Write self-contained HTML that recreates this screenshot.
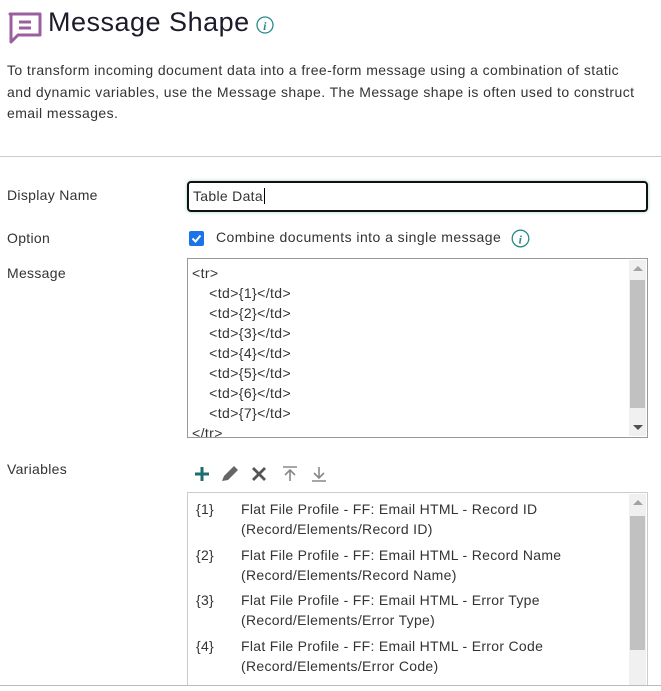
<!DOCTYPE html>
<html><head><style>
*{margin:0;padding:0;box-sizing:border-box}
body{width:661px;height:691px;overflow:hidden;background:#fff;font-family:"Liberation Sans",sans-serif;color:#333;font-size:14px;position:relative;letter-spacing:0.3px}
.a{position:absolute;white-space:nowrap}
.lbl{left:7px;font-size:14px;color:#333}
.sb{position:absolute;right:1px;top:1px;bottom:1px;width:17px;background:#f0f0f0}
.th{position:absolute;left:1px;right:1px;background:#c1c1c1}
.up,.dn{position:absolute;left:4px;width:0;height:0;border-left:5px solid transparent;border-right:5px solid transparent}
.up{top:6px;border-bottom:5px solid #a3a3a3}
.dn{bottom:6px;border-top:5px solid #505050}
</style></head><body>
<svg class="a" style="left:7px;top:11px" width="36" height="34" viewBox="0 0 36 34"><path d="M3 3h30v21H11l-7 7V3z" fill="none" stroke="#9b5fa0" stroke-width="3" stroke-linejoin="round"/><path d="M12 11h12M12 17h12" stroke="#9b5fa0" stroke-width="3"/></svg>
<div class="a" style="left:48px;top:7px;font-size:27px;color:#1b1b2b;letter-spacing:0.5px">Message Shape</div>
<svg class="a" style="left:256px;top:16px" width="18" height="18"><circle cx="9" cy="9" r="8" fill="none" stroke="#2a8a8a" stroke-width="1.3"/><text x="9" y="14" text-anchor="middle" font-family="Liberation Serif" font-style="italic" font-weight="bold" font-size="12" fill="#2a8a8a">i</text></svg>
<div class="a" style="left:7px;top:60px;line-height:21.5px;font-size:14px;color:#333;letter-spacing:0.42px">To transform incoming document data into a free-form message using a combination of static<br>and dynamic variables, use the Message shape. The Message shape is often used to construct<br>email messages.</div>
<div class="a" style="left:0;top:156px;width:661px;height:1px;background:#ccc"></div>
<div class="a lbl" style="top:187px">Display Name</div>
<div class="a" style="left:187px;top:181px;width:461px;height:31px;border:2px solid #111;border-radius:4px;box-shadow:0 0 3px #9cc;padding:5px 4px;font-size:14px">Table Data<span style="border-left:1px solid #000;margin-left:1px"></span></div>
<div class="a lbl" style="top:230px">Option</div>
<div class="a" style="left:189px;top:231px;width:15px;height:15px;background:#1a73e8;border-radius:2px"><svg width="15" height="15"><path d="M3.5 7.5l3 3 5-6" fill="none" stroke="#fff" stroke-width="2"/></svg></div>
<div class="a" style="left:216px;top:229px;font-size:14px;letter-spacing:0.45px">Combine documents into a single message</div>
<svg class="a" style="left:511px;top:229px" width="19" height="19"><circle cx="9.5" cy="9.5" r="8.3" fill="none" stroke="#2a8a8a" stroke-width="1.3"/><text x="9.5" y="14.5" text-anchor="middle" font-family="Liberation Serif" font-style="italic" font-weight="bold" font-size="12" fill="#2a8a8a">i</text></svg>
<div class="a lbl" style="top:265px">Message</div>
<div class="a" style="left:187px;top:258px;width:461px;height:180px;border:1px solid #999;overflow:hidden;font-size:14px;line-height:20px;padding:4px 4px;color:#333;letter-spacing:0.4px">
&lt;tr&gt;<br>&nbsp;&nbsp;&nbsp;&nbsp;&lt;td&gt;{1}&lt;/td&gt;<br>&nbsp;&nbsp;&nbsp;&nbsp;&lt;td&gt;{2}&lt;/td&gt;<br>&nbsp;&nbsp;&nbsp;&nbsp;&lt;td&gt;{3}&lt;/td&gt;<br>&nbsp;&nbsp;&nbsp;&nbsp;&lt;td&gt;{4}&lt;/td&gt;<br>&nbsp;&nbsp;&nbsp;&nbsp;&lt;td&gt;{5}&lt;/td&gt;<br>&nbsp;&nbsp;&nbsp;&nbsp;&lt;td&gt;{6}&lt;/td&gt;<br>&nbsp;&nbsp;&nbsp;&nbsp;&lt;td&gt;{7}&lt;/td&gt;<br>&lt;/tr&gt;
<div class="sb"><div class="up"></div><div class="th" style="top:20px;height:128px"></div><div class="dn"></div></div></div>
<div class="a lbl" style="top:461px">Variables</div>
<svg class="a" style="left:192px;top:464px" width="140" height="18"><path d="M10 3v14M3 10h14" stroke="#1f6e6e" stroke-width="3"/><path d="M30 17l2-5 10-10 4 4-10 10z" fill="#666"/><path d="M61 4l12 12M73 4L61 16" stroke="#555" stroke-width="2.8"/><path d="M91 3h14M98 6v11M93 11l5-5 5 5" fill="none" stroke="#888" stroke-width="1.6"/><path d="M127 3v11M122 9l5 5 5-5M120 17h14" fill="none" stroke="#888" stroke-width="1.6"/></svg>
<div class="a" style="left:187px;top:492px;width:461px;height:194px;border:1px solid #ccc;border-bottom:none;overflow:hidden;font-size:14px;line-height:20px;color:#333">
<div class="a" style="left:8px;top:6px">{1}</div><div class="a" style="left:53px;top:6px">Flat File Profile - FF: Email HTML - Record ID<br>(Record/Elements/Record ID)</div>
<div class="a" style="left:8px;top:52px">{2}</div><div class="a" style="left:53px;top:52px">Flat File Profile - FF: Email HTML - Record Name<br>(Record/Elements/Record Name)</div>
<div class="a" style="left:8px;top:97px">{3}</div><div class="a" style="left:53px;top:97px">Flat File Profile - FF: Email HTML - Error Type<br>(Record/Elements/Error Type)</div>
<div class="a" style="left:8px;top:143px">{4}</div><div class="a" style="left:53px;top:143px">Flat File Profile - FF: Email HTML - Error Code<br>(Record/Elements/Error Code)</div>
<div class="sb" style="bottom:0"><div class="up"></div><div class="th" style="top:22px;height:134px"></div></div></div>
<div class="a" style="left:0;top:685px;width:661px;height:1px;background:#bbb"></div>
</body></html>
